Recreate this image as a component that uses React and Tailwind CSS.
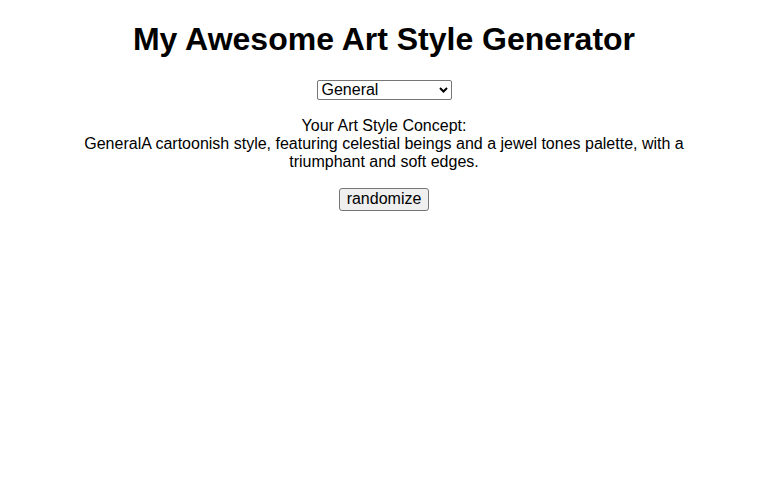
import React, { useState } from "react";

const styles = ["General", "Portrait", "Landscape", "Character Design"];

export default function App() {
  const [style, setStyle] = useState("General");
  return (
    <div className="bg-white text-black text-center font-['Liberation_Sans',Arial,sans-serif] text-[16px] leading-[normal]">
      <h1 className="text-[32px] font-bold my-[21.44px] leading-[normal]">My Awesome Art Style Generator</h1>
      <div className="flex justify-center">
        <div className="relative w-[135px] h-[20px]">
          <select
            value={style}
            onChange={(e) => setStyle(e.target.value)}
            className="appearance-none block w-full h-[20px] border border-[#767676] rounded-[2px] bg-white pl-[4px] pr-[20px] py-0 text-[16px] leading-[18px] text-left text-black"
          >
            {styles.map((s) => (
              <option key={s}>{s}</option>
            ))}
          </select>
          <svg className="pointer-events-none absolute right-[4px] top-[7px]" width="9" height="6" viewBox="0 0 9 6">
            <path d="M1 1 L4.5 4.5 L8 1" fill="none" stroke="#000" strokeWidth="2" />
          </svg>
        </div>
      </div>
      <p className="mt-[17px] mb-[17px] leading-[normal]">
        Your Art Style Concept:
        <br />
        GeneralA cartoonish style, featuring celestial beings and a jewel tones palette, with a
        <br />
        triumphant and soft edges.
      </p>
      <button className="bg-[#efefef] border border-[#767676] rounded-[3px] px-[7px] h-[23px] leading-[normal] text-[16px] text-black">
        randomize
      </button>
    </div>
  );
}
